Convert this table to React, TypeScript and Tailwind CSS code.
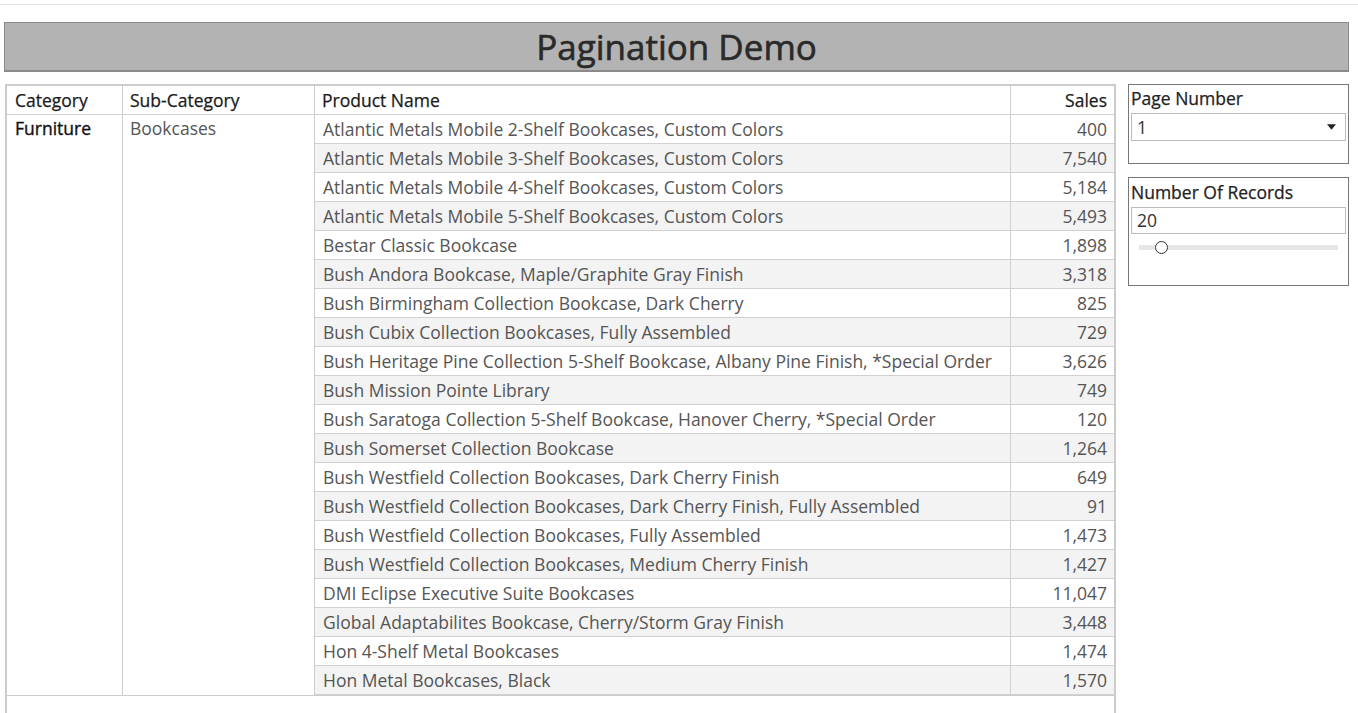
import * as React from 'react';

// Pagination demo — a Tableau-style crosstab with two parameter controls.

interface Row {
  name: string;
  sales: string;
}

const ROWS: Row[] = [
  { name: 'Atlantic Metals Mobile 2-Shelf Bookcases, Custom Colors', sales: '400' },
  { name: 'Atlantic Metals Mobile 3-Shelf Bookcases, Custom Colors', sales: '7,540' },
  { name: 'Atlantic Metals Mobile 4-Shelf Bookcases, Custom Colors', sales: '5,184' },
  { name: 'Atlantic Metals Mobile 5-Shelf Bookcases, Custom Colors', sales: '5,493' },
  { name: 'Bestar Classic Bookcase', sales: '1,898' },
  { name: 'Bush Andora Bookcase, Maple/Graphite Gray Finish', sales: '3,318' },
  { name: 'Bush Birmingham Collection Bookcase, Dark Cherry', sales: '825' },
  { name: 'Bush Cubix Collection Bookcases, Fully Assembled', sales: '729' },
  {
    name: 'Bush Heritage Pine Collection 5-Shelf Bookcase, Albany Pine Finish, *Special Order',
    sales: '3,626',
  },
  { name: 'Bush Mission Pointe Library', sales: '749' },
  { name: 'Bush Saratoga Collection 5-Shelf Bookcase, Hanover Cherry, *Special Order', sales: '120' },
  { name: 'Bush Somerset Collection Bookcase', sales: '1,264' },
  { name: 'Bush Westfield Collection Bookcases, Dark Cherry Finish', sales: '649' },
  { name: 'Bush Westfield Collection Bookcases, Dark Cherry Finish, Fully Assembled', sales: '91' },
  { name: 'Bush Westfield Collection Bookcases, Fully Assembled', sales: '1,473' },
  { name: 'Bush Westfield Collection Bookcases, Medium Cherry Finish', sales: '1,427' },
  { name: 'DMI Eclipse Executive Suite Bookcases', sales: '11,047' },
  { name: 'Global Adaptabilites Bookcase, Cherry/Storm Gray Finish', sales: '3,448' },
  { name: 'Hon 4-Shelf Metal Bookcases', sales: '1,474' },
  { name: 'Hon Metal Bookcases, Black', sales: '1,570' },
];

function ProductRow({ row, index }: { row: Row; index: number }): React.JSX.Element {
  const shaded = index % 2 === 1;
  return (
    <div
      className={`flex h-[29px] border-b border-[#d0d0d0] ${shaded ? 'bg-[#f3f3f3]' : 'bg-white'}`}
    >
      <div className="flex-1 flex items-center pl-[8px] text-[#555] truncate">{row.name}</div>
      <div className="w-[104px] flex items-center justify-end pr-[7px] border-l border-[#d0d0d0] text-[#555]">
        {row.sales}
      </div>
    </div>
  );
}

function Crosstab(): React.JSX.Element {
  return (
    <div className="ml-[5px] w-[1111px] h-[640px] border-2 border-b-0 border-[#cccccc]">
      <div className="flex h-[29px] border-b border-[#d0d0d0] text-[#1a1a1a] [-webkit-text-stroke:0.25px_#1a1a1a]">
        <div className="w-[116px] flex items-center pl-[8px] border-r border-[#cccccc]">Category</div>
        <div className="w-[192px] flex items-center pl-[7px] border-r border-[#cccccc]">
          Sub-Category
        </div>
        <div className="flex-1 flex items-center pl-[7px]">Product Name</div>
        <div className="w-[104px] flex items-center justify-end pr-[7px] border-l border-[#d0d0d0]">
          Sales
        </div>
      </div>
      <div className="flex border-b border-[#cccccc]">
        <div className="w-[116px] pl-[8px] border-r border-[#cccccc] text-[#111] [-webkit-text-stroke:0.35px_#111]">
          Furniture
        </div>
        <div className="w-[192px] pl-[7px] border-r border-[#cccccc] text-[#555]">Bookcases</div>
        <div className="flex-1 flex flex-col">
          {ROWS.map((r, i) => (
            <ProductRow key={r.name} row={r} index={i} />
          ))}
        </div>
      </div>
    </div>
  );
}

function Controls(): React.JSX.Element {
  return (
    <div className="w-[221px] flex flex-col gap-[13px]">
      <div className="h-[80px] border border-[#777] px-[2px]">
        <div className="text-[#222] leading-[27px] [-webkit-text-stroke:0.25px_#222]">Page Number</div>
        <div className="mt-px h-[28px] border border-[#bbb] flex items-center justify-between pl-[5px] pr-[9px] text-[#333]">
          <span>1</span>
          <svg viewBox="0 0 10 6" className="w-[9px] h-[6px]">
            <path d="M0 0h10L5 6z" fill="#222" />
          </svg>
        </div>
      </div>
      <div className="h-[109px] border border-[#777] px-[2px] pt-px">
        <div className="text-[#222] leading-[27px] [-webkit-text-stroke:0.25px_#222]">
          Number Of Records
        </div>
        <div className="mt-px h-[27px] border border-[#bbb] flex items-center pl-[5px] text-[#333]">20</div>
        <div className="relative mx-[8px] mt-[7px] h-[13px] flex items-center">
          <div className="w-full h-[5px] bg-[#e6e6e6]" />
          <div className="absolute left-[16px] top-0 w-[13px] h-[13px] rounded-full bg-white border border-[#333]" />
        </div>
      </div>
    </div>
  );
}

export default function App(): React.JSX.Element {
  return (
    <div
      className="w-[1358px] h-[713px] overflow-hidden bg-white text-[17.5px]"
      style={{ fontFamily: '"Open Sans", sans-serif' }}
    >
      <div className="h-[4px]" />
      <div className="h-px bg-[#e2e2e2]" />
      <div className="h-[17px]" />
      <div className="ml-[4px] w-[1345px] h-[50px] bg-[#b3b3b3] border border-b-2 border-[#8a8a8a] flex items-center justify-center">
        <span className="text-[35px] text-[#2a2a2a] leading-none [-webkit-text-stroke:0.6px_#2a2a2a]">
          Pagination Demo
        </span>
      </div>
      <div className="h-[12px]" />
      <div className="flex gap-[12px]">
        <Crosstab />
        <Controls />
      </div>
    </div>
  );
}
